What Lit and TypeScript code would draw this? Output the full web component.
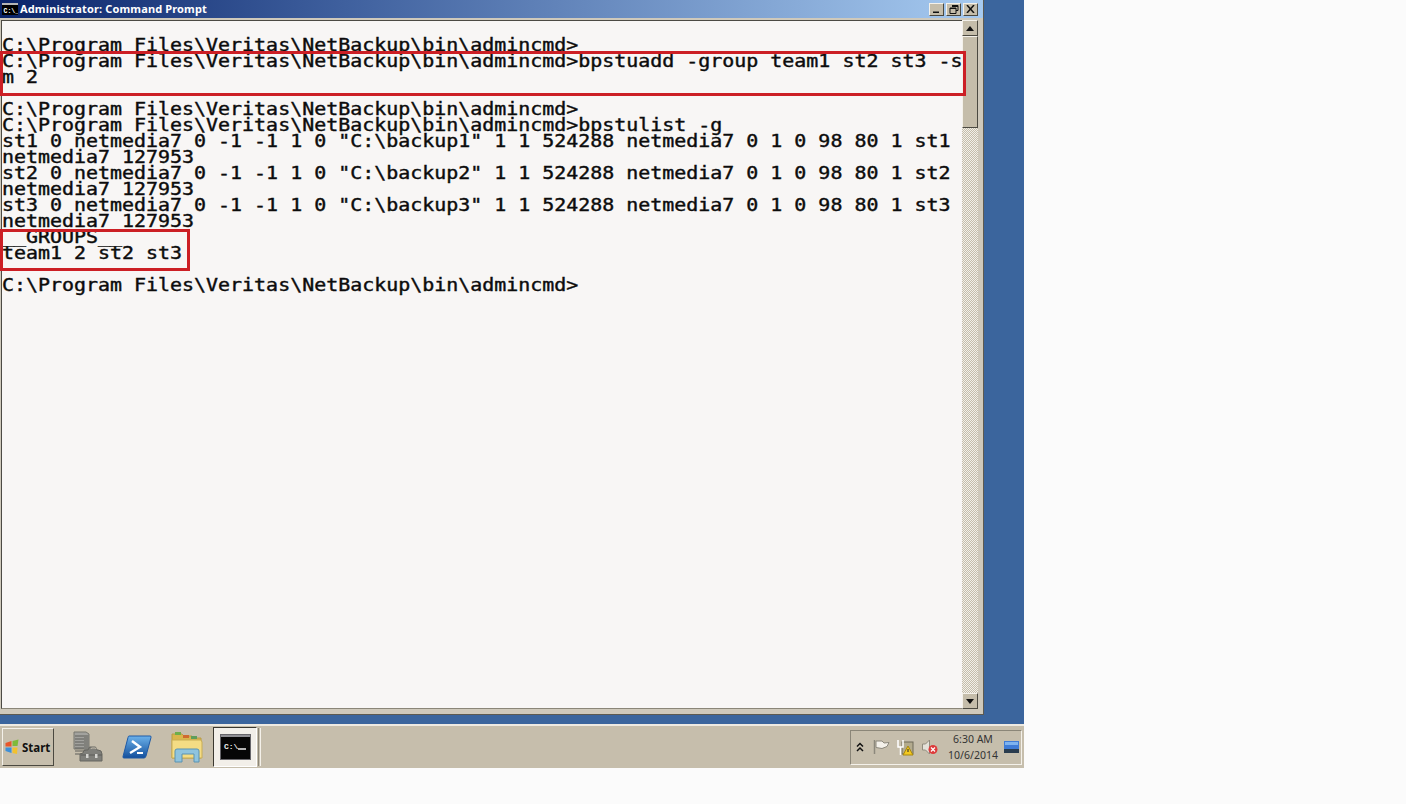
import { LitElement, html, css } from "lit";
import { customElement } from "lit/decorators.js";

const P = "C:\\Program Files\\Veritas\\NetBackup\\bin\\admincmd>";
const LINES = [
  "",
  P,
  P + "bpstuadd -group team1 st2 st3 -s",
  "m 2",
  "",
  P,
  P + "bpstulist -g",
  'st1 0 netmedia7 0 -1 -1 1 0 "C:\\backup1" 1 1 524288 netmedia7 0 1 0 98 80 1 st1',
  "netmedia7 127953",
  'st2 0 netmedia7 0 -1 -1 1 0 "C:\\backup2" 1 1 524288 netmedia7 0 1 0 98 80 1 st2',
  "netmedia7 127953",
  'st3 0 netmedia7 0 -1 -1 1 0 "C:\\backup3" 1 1 524288 netmedia7 0 1 0 98 80 1 st3',
  "netmedia7 127953",
  "__GROUPS__",
  "team1 2 st2 st3",
  "",
  P,
];

@customElement("app-root")
export class AppRoot extends LitElement {
  static styles = css`
    :host { display: block; width: 1406px; height: 804px; background: #fbfbfb; overflow: hidden; }
    .desktop { position: relative; width: 1024px; height: 768px; background: #3b659d; display: flex; flex-direction: column; justify-content: space-between; }
    .window { width: 984px; height: 715px; box-sizing: border-box; background: #cfc9bb; border-right: 1px solid #5d5a50; border-bottom: 1px solid #5d5a50; display: flex; flex-direction: column; }
    .title { height: 18px; flex: none; background: linear-gradient(90deg, #0a246a 0%, #3f609e 35%, #a6caf0 100%); display: flex; align-items: center; padding-left: 2px; gap: 2px; }
    .title-text { color: #fff; font: bold 11px "Noto Sans", sans-serif; letter-spacing: 0.14px; flex: 1; position: relative; top: -1px; white-space: nowrap; }
    .ctrls { display: flex; margin-right: 5px; gap: 2px; }
    .ctrl { width: 15px; height: 13px; background: #c5bdaa; border: 1px solid; border-color: #f4f1ea #4b4940 #4b4940 #f4f1ea; box-sizing: border-box; display: flex; align-items: center; justify-content: center; }
    .client { margin: 2px 0 5px 1px; flex: 1; display: flex; min-height: 0; padding-right: 5px; }
    .console { flex: 1; background: #f8f6f5; border-top: 1px solid #4c4a44; border-left: 1px solid #4c4a44; border-bottom: 1px solid #8b8678; margin: 0; box-sizing: border-box; overflow: hidden; min-width: 0; }
    .lines { margin: 0; width: 821px; padding: 0; transform: scaleX(1.173); transform-origin: 0 0; font: 17px/16px "DejaVu Sans Mono", monospace; color: #0c0c0c; -webkit-text-stroke: 0.4px #0c0c0c; white-space: pre; }
    .scroll { width: 16px; flex: none; display: flex; flex-direction: column; background: repeating-conic-gradient(#c5bdaa 0 25%, #f2f0ea 0 50%) 0 0 / 2px 2px; }
    .sb { height: 16px; flex: none; background: #c5bdaa; box-sizing: border-box; border: 1px solid; border-color: #f4f1ea #4b4940 #4b4940 #f4f1ea; display: flex; align-items: center; justify-content: center; }
    .thumb { height: 92px; flex: none; background: #c5bdaa; box-sizing: border-box; border: 1px solid; border-color: #f4f1ea #4b4940 #4b4940 #f4f1ea; }
    .track { flex: 1; }
    .mark { position: absolute; box-sizing: border-box; border: 3px solid #cc1f25; }
    .m1 { left: 0; top: 51px; width: 966px; height: 45px; }
    .m2 { left: 0; top: 229px; width: 190px; height: 42px; }
    .taskbar { height: 44px; flex: none; background: #c6beac; border-top: 2px solid #eeeae2; box-sizing: border-box; display: flex; align-items: center; padding: 0 0 0 2px; }
    .start { width: 52px; height: 38px; box-sizing: border-box; border: 1px solid; border-color: #f4f1ea #4b4940 #4b4940 #f4f1ea; display: flex; align-items: center; gap: 1px; padding-left: 1px; font: bold 11.5px "Noto Sans", sans-serif; color: #111; }
    .quick { display: flex; align-items: center; margin-left: 19px; gap: 19px; }
    .ico { display: block; flex: none; }
    .active { margin-left: 10px; width: 44px; height: 40px; box-sizing: border-box; border: 1px solid; border-color: #3a3830 #fff #fff #3a3830; background: #f2efe9; display: flex; align-items: center; justify-content: center; }
    .grip { height: 38px; margin-left: 1px; border-left: 1px solid #8b8678; border-right: 1px solid #f4f1ea; width: 1px; box-sizing: content-box; }
    .tray { margin-left: auto; margin-right: 2px; width: 172px; height: 35px; box-sizing: border-box; border: 1px solid; border-color: #8b8678 #f4f1ea #f4f1ea #8b8678; display: flex; align-items: center; padding-left: 5px; }
    .tray-icons { display: flex; align-items: center; gap: 7px; }
    .chev { margin-right: 2px; }
    .clock { margin-left: 8px; font: 10.5px/16px "Noto Sans", sans-serif; color: #333; text-align: center; width: 54px; flex: none; }
    .monitor { margin-left: 4px; }
  `;

  private win() {
    return html`<svg class="ico" width="17" height="16" viewBox="0 0 16 16">
      <path d="M1 4l6-2v5.500H1z" fill="#e8562a"/><path d="M8 2l6-1.500L13 7H8z" fill="#7fba3a"/>
      <path d="M1 8.500h6V14l-6-2z" fill="#3d8fd8"/><path d="M8 8.500h5l-.5 6.500-4.500-1z" fill="#f2c12e"/></svg>`;
  }

  private server() {
    return html`<svg class="ico" width="30" height="32" viewBox="0 0 30 32">
      <path d="M1 1h12l3 2v15H1z" fill="#a2a29e" stroke="#77776f"/>
      <path d="M2 5h9M2 8h9M2 11h9M2 14h9M2 17h9M2 20h9M2 23h9" stroke="#5e5e5a"/>
      <path d="M11 4h5v16h-5z" fill="#81817c"/>
      <path d="M10 22a3 3 0 0 1 3-3h2l1.500-3h6l1.500 3h1a4 4 0 0 1 4 4v7H7v-7z" fill="#7f7f7a" stroke="#676761"/>
      <path d="M18 18l.5-1h4l.5 1" fill="none" stroke="#c6beac"/>
      <path d="M8 24h21" stroke="#5c5c58"/><rect x="13" y="23" width="2.500" height="4" fill="#d4d4d0"/><rect x="22" y="23" width="2.500" height="4" fill="#d4d4d0"/></svg>`;
  }

  private shell() {
    return html`<svg class="ico" width="30" height="24" viewBox="0 0 30 24">
      <defs><linearGradient id="ps" x1="0" y1="0" x2="0" y2="1"><stop offset="0" stop-color="#6cb2ea"/><stop offset="1" stop-color="#124f9c"/></linearGradient></defs>
      <path d="M7 1h21q1.500 0 1 1.500L24 21q-.5 2-2 2H2q-1.500 0-1-1.500L6 2.500Q6.300 1 7 1z" fill="url(#ps)" stroke="#1f5aa5"/>
      <path d="M10 6l8 6-10 6" fill="none" stroke="#fff" stroke-width="2.400"/><path d="M15 18h6" stroke="#fff" stroke-width="2"/></svg>`;
  }

  private folder() {
    return html`<svg class="ico" width="32" height="32" viewBox="0 0 32 32">
      <path d="M1 3h10l2 2h8l2 2h7v20H1z" fill="#d9b64c" stroke="#b89c46"/>
      <rect x="4" y="1" width="6" height="3" fill="#6eae4a"/><rect x="12" y="4" width="6" height="3" fill="#cf6a30"/><rect x="20" y="5" width="6" height="3" fill="#5e9e5a"/>
      <path d="M1 9h29l1 2v16H1z" fill="#f4dc84" stroke="#c8ad55"/>
      <path d="M4 20a2 2 0 0 1 2-2h20a2 2 0 0 1 2 2v11h-5v-8H11v8H4z" fill="#8fc4de" stroke="#5b93b2"/></svg>`;
  }

  private cmd() {
    return html`<svg class="ico" width="31" height="26" viewBox="0 0 31 26">
      <rect width="30" height="25" x=".5" y=".5" fill="#060606" stroke="#67666a"/><rect x="1" y="1" width="29" height="2" fill="#8f8f94"/>
      <text x="4" y="15" fill="#eee" font-family="Liberation Mono" font-size="8" font-weight="bold">C:\\</text>
      <path d="M18 15h8" stroke="#eee" stroke-width="1.500"/></svg>`;
  }

  private tray() {
    return html`<div class="tray-icons">
      <svg class="ico chev" width="8" height="10" viewBox="0 0 8 10"><path d="M1 4.500l3-3 3 3M1 9l3-3 3 3" fill="none" stroke="#111" stroke-width="1.500"/></svg>
      <svg class="ico" width="17" height="16" viewBox="0 0 17 16"><path d="M1.500 1v14" stroke="#8c887c" stroke-width="1.500"/><path d="M3 2h6l2 2 5-.5-2 4-5 2-6-1z" fill="#f4f1ea" stroke="#8c887c"/></svg>
      <svg class="ico" width="17" height="17" viewBox="0 0 17 17"><rect x="5" y="3" width="11" height="12" fill="#b3ab8e" stroke="#6e6a58"/><path d="M1 1v7h5V1M3.500 8v8" fill="none" stroke="#fff" stroke-width="1.500"/><path d="M11 7l5 9H6z" fill="#f3c920" stroke="#a8870e"/><path d="M11 10v3" stroke="#222"/></svg>
      <svg class="ico" width="17" height="16" viewBox="0 0 16 16"><path d="M1 5h3l4-4v14l-4-4H1z" fill="#e4e1d9" stroke="#918c7e"/><circle cx="11.500" cy="10.500" r="4.500" fill="#dd3c3c"/><path d="M9.500 8.500l4 4m0-4l-4 4" stroke="#fff" stroke-width="1.200"/></svg>
    </div>`;
  }

  render() {
    const arrow = (d: string) => html`<svg width="8" height="5" viewBox="0 0 8 5"><path d="${d}" fill="#111"/></svg>`;
    return html`<div class="desktop">
      <div class="window">
        <div class="title">
          <svg class="ico" width="16" height="12" viewBox="0 0 16 12"><rect width="16" height="12" fill="#000"/><rect y="0" width="16" height="2" fill="#b5b5b5"/><text x="1.500" y="9.500" fill="#fff" font-family="Liberation Mono" font-size="6.500" font-weight="bold">C:\\_</text></svg>
          <span class="title-text">Administrator: Command Prompt</span>
          <div class="ctrls">
            <div class="ctrl"><svg width="8" height="8" viewBox="0 0 8 8"><path d="M0 6.500h6v1.500H0z" fill="#111"/></svg></div>
            <div class="ctrl"><svg width="10" height="9" viewBox="0 0 10 9"><path d="M3 .5h6v5H7M1 3h6v5.500H1z M1 3.500h6M3 1.500h6" fill="none" stroke="#111"/></svg></div>
            <div class="ctrl"><svg width="9" height="8" viewBox="0 0 9 8"><path d="M1 0l7 8M8 0L1 8" stroke="#111" stroke-width="1.500"/></svg></div>
          </div>
        </div>
        <div class="client">
          <div class="console"><pre class="lines">${LINES.join("\n")}</pre></div>
          <div class="scroll">
            <div class="sb">${arrow("M4 0l4 5H0z")}</div>
            <div class="thumb"></div>
            <div class="track"></div>
            <div class="sb">${arrow("M0 0h8L4 5z")}</div>
          </div>
        </div>
      </div>
      <div class="taskbar">
        <div class="start">${this.win()}Start</div>
        <div class="quick">${this.server()}${this.shell()}${this.folder()}</div>
        <div class="active">${this.cmd()}</div>
        <div class="grip"></div>
        <div class="tray">
          ${this.tray()}
          <div class="clock">6:30 AM<br />10/6/2014</div>
          <svg class="ico monitor" width="15" height="12" viewBox="0 0 15 12"><rect width="15" height="12" fill="#3f7bd6"/><rect y="8" width="15" height="4" fill="#2a3c4e"/><rect x="1" y="1" width="13" height="3" fill="#7fb3ef"/></svg>
        </div>
      </div>
      <div class="mark m1"></div>
      <div class="mark m2"></div>
    </div>`;
  }
}
